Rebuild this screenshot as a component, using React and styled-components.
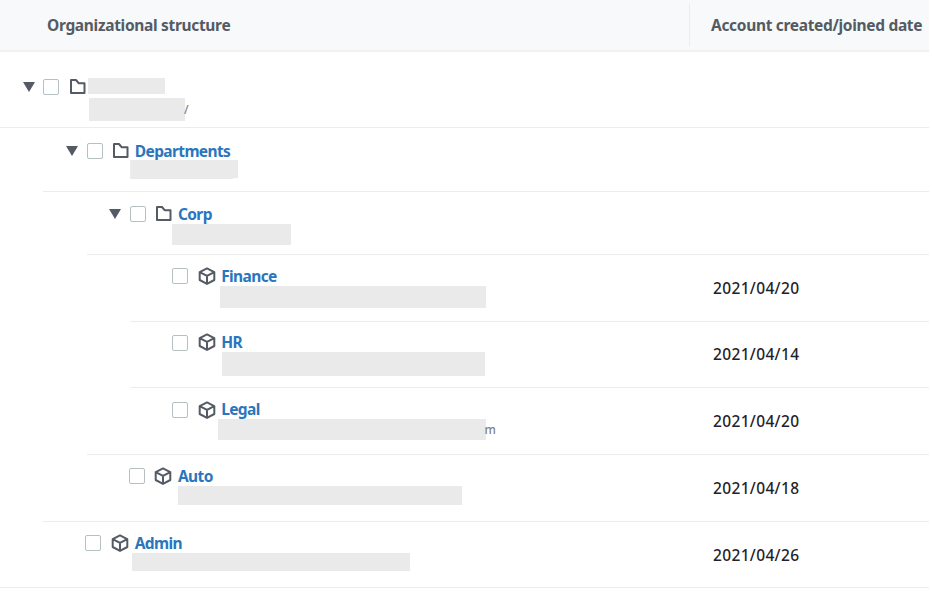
import React from "react";
import styled, { createGlobalStyle } from "styled-components";

const INDENT = 43.2;

const accounts = [
  {
    id: "root",
    type: "root",
    depth: 0,
    line: 0,
    height: 76,
    top: 26,
    box: 1,
    icon: 0,
    mask: { x: -3, y: 4, w: 96, h: 23 },
    tail: "/",
  },
  {
    id: "departments",
    type: "folder",
    name: "Departments",
    depth: 1,
    line: 43,
    height: 64,
    top: 14,
    box: 1,
    icon: 0,
    mask: { x: -5, y: 0, w: 108, h: 19, notch: true },
  },
  {
    id: "corp",
    type: "folder",
    name: "Corp",
    depth: 2,
    line: 87,
    height: 63,
    top: 13,
    box: 1,
    icon: 0,
    mask: { x: -6.5, y: 1, w: 119.5, h: 21 },
  },
  {
    id: "finance",
    type: "account",
    name: "Finance",
    date: "2021/04/20",
    depth: 3,
    line: 130,
    height: 67,
    top: 12,
    box: 1,
    icon: 0,
    mask: { x: -2, y: 1, w: 266, h: 22 },
  },
  {
    id: "hr",
    type: "account",
    name: "HR",
    date: "2021/04/14",
    depth: 3,
    line: 130,
    height: 66,
    top: 11,
    box: 2,
    icon: 0,
    mask: { x: 0.5, y: 1, w: 263, h: 24 },
  },
  {
    id: "legal",
    type: "account",
    name: "Legal",
    date: "2021/04/20",
    depth: 3,
    line: 87,
    height: 67,
    top: 12,
    box: 2,
    icon: 1,
    mask: { x: -4, y: 1, w: 268, h: 21 },
    tail: "m",
  },
  {
    id: "auto",
    type: "account",
    name: "Auto",
    date: "2021/04/18",
    depth: 2,
    line: 43,
    height: 67,
    top: 12,
    box: 1,
    icon: 0,
    mask: { x: -0.5, y: 1, w: 284, h: 19 },
  },
  {
    id: "admin",
    type: "account",
    name: "Admin",
    date: "2021/04/26",
    depth: 1,
    line: 0,
    height: 66,
    top: 12,
    box: 1,
    icon: 0,
    mask: { x: -3, y: 1, w: 278, h: 18 },
  },
];

const FolderIcon = () => (
  <svg width="17" height="18" viewBox="0 0 17 18" fill="none">
    <path
      d="M2 2H7L9.6 5.2H15.5V15H2Z"
      stroke="#545b64"
      strokeWidth="2"
      strokeLinejoin="round"
    />
  </svg>
);

const CubeIcon = () => (
  <svg width="18" height="18" viewBox="0 0 18 18" fill="none">
    <path
      d="M9 1.4L16.3 5.1V13L9 16.9L1.7 13V5.1ZM1.7 5.1L9 8.9L16.3 5.1M9 8.9V16.9"
      stroke="#545b64"
      strokeWidth="2"
      strokeLinejoin="round"
    />
  </svg>
);

const AccountRow = ({ item }) => {
  const leaf = item.type === "account";

  return (
    <Row $depth={item.depth} $line={item.line} $height={item.height} $top={item.top}>
      <Toggle as={leaf ? "span" : "button"}>{!leaf && <Caret />}</Toggle>
      <CheckBox type="checkbox" name={item.id} $top={item.box} $leaf={leaf} />
      <Icon $top={item.icon} $leaf={leaf}>
        {leaf ? <CubeIcon /> : <FolderIcon />}
      </Icon>
      <Info>
        {item.name ? <Name href="#">{item.name}</Name> : <NameMask />}
        <Detail $x={item.mask.x} $y={item.mask.y}>
          <Mask $w={item.mask.w} $h={item.mask.h} $notch={item.mask.notch} />
          {item.tail && <Tail>{item.tail}</Tail>}
        </Detail>
      </Info>
      <DateCell>{item.date}</DateCell>
    </Row>
  );
};

const App = () => (
  <>
    <GlobalStyle />
    <Table>
      <Header>
        <StructureTitle>Organizational structure</StructureTitle>
        <DateTitle>Account created/joined date</DateTitle>
      </Header>
      {accounts.map((item) => (
        <AccountRow key={item.id} item={item} />
      ))}
    </Table>
  </>
);

export default App;

const GlobalStyle = createGlobalStyle`
  * {
    box-sizing: border-box;
  }

  body {
    margin: 0;
    overflow: hidden;
    background: #ffffff;
    font-family: "Noto Sans", sans-serif;
  }
`;

const Table = styled.main`
  width: 929px;
  height: 592px;
`;

const Header = styled.header`
  display: flex;
  align-items: center;
  height: 52px;

  color: #545b64;
  font-size: 15.5px;
  font-weight: 700;
  letter-spacing: -0.32px;
  white-space: nowrap;

  background: #f8f9fa;
  border-bottom: 2px solid #eff1f1;
`;

const StructureTitle = styled.div`
  flex: 1;
  padding-left: 47px;
`;

const DateTitle = styled.div`
  display: flex;
  align-items: center;
  width: 240px;
  height: 42px;
  padding-left: 21px;
  border-left: 1px solid #eaeded;
`;

const Row = styled.div`
  display: flex;
  align-items: flex-start;
  height: ${({ $height }) => $height}px;
  margin-left: ${({ $line }) => $line}px;
  padding-top: ${({ $top }) => $top}px;
  padding-left: ${({ $depth, $line }) => 23 + $depth * INDENT - $line}px;
  border-bottom: 1px solid #eaeded;
`;

const Toggle = styled.button`
  display: flex;
  align-items: center;
  flex-shrink: 0;
  width: 12px;
  height: 18px;
  padding: 0;
  border: none;
  background: none;
`;

const Caret = styled.span`
  border-top: 10px solid #545b64;
  border-left: 6px solid transparent;
  border-right: 6px solid transparent;
`;

const CheckBox = styled.input`
  appearance: none;
  flex-shrink: 0;
  width: 16px;
  height: 16px;
  margin: ${({ $top }) => $top}px 0 0 ${({ $leaf }) => ($leaf ? 7.2 : 8.4)}px;
  border: 1px solid #b4c0c1;
  border-radius: 2px;
  background: #ffffff;

  &:checked {
    background: #0073bb;
  }
`;

const Icon = styled.span`
  display: flex;
  flex-shrink: 0;
  width: 18px;
  margin-top: ${({ $top }) => $top}px;
  margin-left: ${({ $leaf }) => ($leaf ? 9.8 : 9.4)}px;
  margin-right: ${({ $leaf }) => ($leaf ? 5.6 : 4.8)}px;
`;

const Info = styled.div`
  flex: 1;
  min-width: 0;
`;

const Name = styled.a`
  display: block;
  height: 18px;

  color: #2a76bd;
  font-size: 15.5px;
  font-weight: 700;
  line-height: 18px;
  letter-spacing: -0.62px;
  text-decoration: none;
`;

const NameMask = styled.div`
  width: 77px;
  height: 16px;
  margin: 0 0 0 -4px;
  background: #eaeaea;
`;

const Detail = styled.div`
  display: flex;
  align-items: center;
  margin-top: ${({ $y }) => $y}px;
  margin-left: ${({ $x }) => $x + 0.4}px;
`;

const Mask = styled.div`
  width: ${({ $w }) => $w}px;
  height: ${({ $h }) => $h}px;
  background: #eaeaea;
  clip-path: ${({ $notch }) =>
    $notch
      ? "polygon(0 0, 100% 0, 100% 18px, 103px 18px, 103px 100%, 0 100%)"
      : "none"};
`;

const Tail = styled.span`
  margin-left: -1px;

  color: #7d838a;
  font-size: 12px;
  font-weight: 500;
  line-height: 14px;
`;

const DateCell = styled.time`
  align-self: stretch;
  display: flex;
  align-items: center;
  flex-shrink: 0;
  width: 216px;
  margin-top: -12px;

  color: #1f2329;
  font-size: 15.5px;
  font-weight: 500;
  letter-spacing: 0.35px;
`;
